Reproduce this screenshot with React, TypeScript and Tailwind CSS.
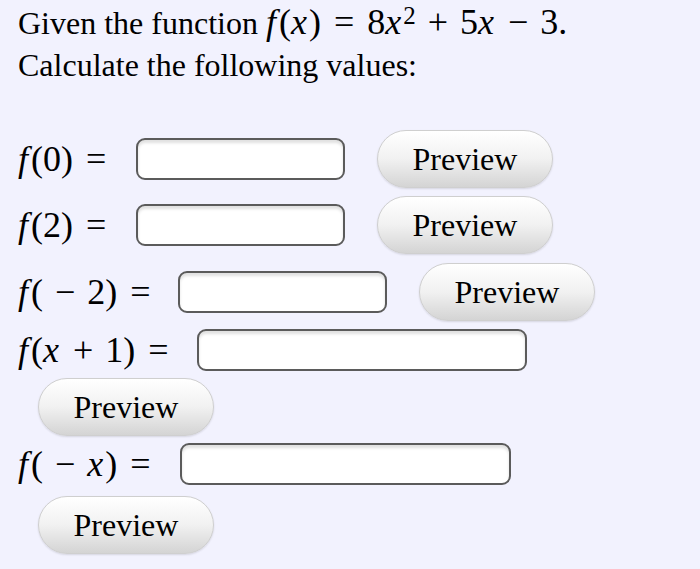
import React from "react";

const V = ({ children }: { children: React.ReactNode }) => (
    <span className="italic mr-[2px]">{children}</span>
);

const F = () => <span className="italic mr-[3px]">f</span>;

const Rel = () => <span className="mx-[13px]">=</span>;

const Op = ({ children }: { children: React.ReactNode }) => (
    <span className="mx-[12px]">{children}</span>
);

const Answer = ({ width }: { width: string }) => (
    <input
        type="text"
        className={`${width} h-[42px] bg-white border-2 border-[#5b5b5b] rounded-[9px] shadow-[inset_0_3px_3px_rgba(0,0,0,0.12)] outline-none`}
    />
);

const PreviewButton = () => (
    <button className="w-[176px] h-[58px] rounded-full border border-[#cfcfcf] bg-gradient-to-b from-white via-[#f1f1f1] to-[#d4d4d4] shadow-[0_1px_2px_rgba(0,0,0,0.12)] font-['Liberation_Serif',serif] text-[32px] leading-none text-black">
        Preview
    </button>
);

const App = () => {
    return (
        <div className="w-[700px] h-[569px] overflow-hidden bg-[#f2f2fe] text-black font-['Liberation_Serif',serif] text-[32px]">
            <div className="pl-[18px] pt-[2px] leading-[42px]">
                <p>
                    Given the function{" "}
                    <span className="text-[36px] leading-none">
                        <F />(<V>x</V>)
                        <Rel />8<V>x</V>
                        <span className="inline-block align-top text-[25px] leading-[27px]">2</span>
                        <Op>+</Op>5<V>x</V>
                        <Op>−</Op>3.
                    </span>
                </p>
                <p>Calculate the following values:</p>
            </div>

            <div className="pl-[18px] text-[36px]">
                {/* f(0) */}
                <div className="mt-[44px] h-[58px] flex items-center">
                    <span className="w-[118px] shrink-0">
                        <F />(0)
                        <Rel />
                    </span>
                    <Answer width="w-[209px]" />
                    <div className="ml-[32px]">
                        <PreviewButton />
                    </div>
                </div>

                {/* f(2) */}
                <div className="mt-[8px] h-[58px] flex items-center">
                    <span className="w-[118px] shrink-0">
                        <F />(2)
                        <Rel />
                    </span>
                    <Answer width="w-[209px]" />
                    <div className="ml-[32px]">
                        <PreviewButton />
                    </div>
                </div>

                {/* f(-2) */}
                <div className="mt-[9px] h-[58px] flex items-center">
                    <span className="w-[160px] shrink-0 whitespace-nowrap">
                        <F />(<Op>−</Op>2)
                        <Rel />
                    </span>
                    <Answer width="w-[209px]" />
                    <div className="ml-[32px]">
                        <PreviewButton />
                    </div>
                </div>

                {/* f(x+1) */}
                <div className="mt-[5px] h-[48px] flex items-center">
                    <span className="w-[179px] shrink-0 whitespace-nowrap">
                        <F />(<V>x</V>
                        <Op>+</Op>1)
                        <Rel />
                    </span>
                    <Answer width="w-[330px]" />
                </div>
                <div className="mt-[4px] ml-[20px]">
                    <PreviewButton />
                </div>

                {/* f(-x) */}
                <div className="mt-[4px] h-[48px] flex items-center">
                    <span className="w-[162px] shrink-0 whitespace-nowrap">
                        <F />(<Op>−</Op>
                        <V>x</V>)
                        <Rel />
                    </span>
                    <Answer width="w-[331px]" />
                </div>
                <div className="mt-[8px] ml-[20px]">
                    <PreviewButton />
                </div>
            </div>
        </div>
    );
};

export default App;
